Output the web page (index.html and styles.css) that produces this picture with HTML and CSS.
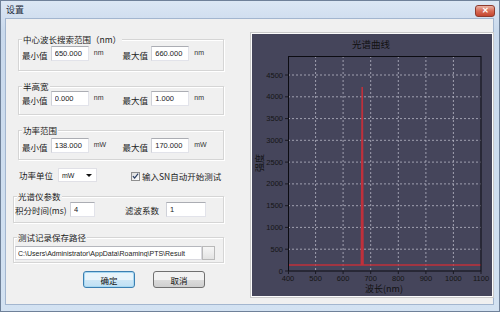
FILE: index.html
```html
<!DOCTYPE html>
<html lang="zh-CN">
<head>
  <meta charset="UTF-8">
  <meta name="viewport" content="width=device-width, initial-scale=1.0">
  <title>设置</title>
  <link rel="stylesheet" href="styles.css">
</head>
<body>
  <div class="window">
    <div class="titlebar">
      <span class="title">设置</span>
      <span class="close">✕</span>
    </div>

    <div class="client">
      <div class="form">
        <div class="group g1">
          <span class="group-title">中心波长搜索范围（nm）</span>
          <div class="row">
            <span class="lbl">最小值</span>
            <input class="field" value="650.000">
            <span class="unit">nm</span>
            <span class="lbl">最大值</span>
            <input class="field" value="660.000">
            <span class="unit">nm</span>
          </div>
        </div>

        <div class="group g2">
          <span class="group-title">半高宽</span>
          <div class="row">
            <span class="lbl">最小值</span>
            <input class="field" value="0.000">
            <span class="unit">nm</span>
            <span class="lbl">最大值</span>
            <input class="field" value="1.000">
            <span class="unit">nm</span>
          </div>
        </div>

        <div class="group g3">
          <span class="group-title">功率范围</span>
          <div class="row">
            <span class="lbl">最小值</span>
            <input class="field" value="138.000">
            <span class="unit">mW</span>
            <span class="lbl">最大值</span>
            <input class="field" value="170.000">
            <span class="unit">mW</span>
          </div>
        </div>

        <div class="power-row">
          <span class="lbl-wide">功率单位</span>
          <div class="select">
            <span>mW</span>
            <span class="arrow"></span>
          </div>
          <label class="check">
            <span class="box">
              <svg width="8" height="8" viewBox="0 0 8 8"><path d="M1 4.2 L3 6.3 L7 1.3" fill="none" stroke="#2b3f63" stroke-width="1.4"/></svg>
            </span>
            输入SN自动开始测试
          </label>
        </div>

        <div class="group g4">
          <span class="group-title">光谱仪参数</span>
          <div class="row row-spec">
            <span class="lbl-spec">积分时间(ms)</span>
            <input class="field small" value="4">
            <span class="lbl-filter">滤波系数</span>
            <input class="field" value="1">
          </div>
        </div>

        <div class="group g5">
          <span class="group-title">测试记录保存路径</span>
          <div class="path-row">
            <input class="path" value="C:\Users\Administrator\AppData\Roaming\PTS\Result">
            <span class="browse"></span>
          </div>
        </div>

        <div class="buttons">
          <button class="btn default">确定</button>
          <button class="btn">取消</button>
        </div>
      </div>

      <div class="chart">
        <svg width="240" height="262" viewBox="0 0 240 262">
          <text class="chart-title" x="119" y="14">光谱曲线</text>

          <!-- grid -->
          <g class="grid">
            <line x1="36" y1="41" x2="229" y2="41"/>
            <line x1="36" y1="62.8" x2="229" y2="62.8"/>
            <line x1="36" y1="84.6" x2="229" y2="84.6"/>
            <line x1="36" y1="106.3" x2="229" y2="106.3"/>
            <line x1="36" y1="128.1" x2="229" y2="128.1"/>
            <line x1="36" y1="149.9" x2="229" y2="149.9"/>
            <line x1="36" y1="171.7" x2="229" y2="171.7"/>
            <line x1="36" y1="193.4" x2="229" y2="193.4"/>
            <line x1="36" y1="215.2" x2="229" y2="215.2"/>
            <line x1="63.6" y1="22" x2="63.6" y2="237"/>
            <line x1="91.1" y1="22" x2="91.1" y2="237"/>
            <line x1="118.7" y1="22" x2="118.7" y2="237"/>
            <line x1="146.3" y1="22" x2="146.3" y2="237"/>
            <line x1="173.9" y1="22" x2="173.9" y2="237"/>
            <line x1="201.4" y1="22" x2="201.4" y2="237"/>
          </g>

          <!-- curve -->
          <polyline class="curve" points="36,231 109.4,231 110.2,53 111,231 229,231"/>

          <rect class="frame" x="36.5" y="22.5" width="192.5" height="214.5"/>

          <!-- ticks -->
          <g class="ticks">
            <line x1="33" y1="41" x2="36" y2="41"/>
            <line x1="33" y1="62.8" x2="36" y2="62.8"/>
            <line x1="33" y1="84.6" x2="36" y2="84.6"/>
            <line x1="33" y1="106.3" x2="36" y2="106.3"/>
            <line x1="33" y1="128.1" x2="36" y2="128.1"/>
            <line x1="33" y1="149.9" x2="36" y2="149.9"/>
            <line x1="33" y1="171.7" x2="36" y2="171.7"/>
            <line x1="33" y1="193.4" x2="36" y2="193.4"/>
            <line x1="33" y1="215.2" x2="36" y2="215.2"/>
            <line x1="33" y1="237" x2="36" y2="237"/>
            <line x1="36.5" y1="237" x2="36.5" y2="240"/>
            <line x1="63.6" y1="237" x2="63.6" y2="240"/>
            <line x1="91.1" y1="237" x2="91.1" y2="240"/>
            <line x1="118.7" y1="237" x2="118.7" y2="240"/>
            <line x1="146.3" y1="237" x2="146.3" y2="240"/>
            <line x1="173.9" y1="237" x2="173.9" y2="240"/>
            <line x1="201.4" y1="237" x2="201.4" y2="240"/>
            <line x1="229" y1="237" x2="229" y2="240"/>
          </g>

          <g class="ylabels">
            <text x="31" y="43.5">4500</text>
            <text x="31" y="65.3">4000</text>
            <text x="31" y="87.1">3500</text>
            <text x="31" y="108.8">3000</text>
            <text x="31" y="130.6">2500</text>
            <text x="31" y="152.4">2000</text>
            <text x="31" y="174.2">1500</text>
            <text x="31" y="195.9">1000</text>
            <text x="31" y="217.7">500</text>
            <text x="31" y="239.5">0</text>
          </g>

          <g class="xlabels">
            <text x="36" y="247">400</text>
            <text x="63.6" y="247">500</text>
            <text x="91.1" y="247">600</text>
            <text x="118.7" y="247">700</text>
            <text x="146.3" y="247">800</text>
            <text x="173.9" y="247">900</text>
            <text x="201.4" y="247">1000</text>
            <text x="229" y="247">1100</text>
          </g>

          <text class="axis-title" x="132" y="258">波长(nm)</text>
          <text class="axis-title" x="11" y="129" transform="rotate(-90 11 129)">强度</text>
        </svg>
      </div>
    </div>
  </div>
</body>
</html>
```

FILE: styles.css
```css
:root {
  --frame: #c9d9ec;
  --frame-dark: #6f8199;
  --face: #f0f0f0;
  --field-border: #abadb3;
  --text: #1b1b1b;
  --chart-bg: #45455b;
  --cjk: "Noto Sans CJK SC", "Liberation Sans", sans-serif;
  --latin: "Liberation Sans", "Noto Sans CJK SC", sans-serif;
}

* {
  box-sizing: border-box;
  margin: 0;
  padding: 0;
}

body {
  width: 500px;
  height: 312px;
  overflow: hidden;
  font-family: var(--cjk);
  font-size: 8.5px;
  color: var(--text);
}

.window {
  width: 500px;
  height: 312px;
  display: flex;
  flex-direction: column;
  background: linear-gradient(#dce7f4, var(--frame) 30px, #d3e2f2);
  border: 1px solid var(--frame-dark);
  padding: 0 5px 6px 4px;
}

.titlebar {
  height: 17px;
  display: flex;
  align-items: center;
  justify-content: space-between;
  padding-left: 1px;
}

.title {
  font-size: 9px;
  color: #1e2a3a;
}

.close {
  width: 20px;
  height: 12px;
  margin-top: 3px;
  margin-right: -1px;
  border: 1px solid #8e3b2e;
  border-radius: 3px;
  background: linear-gradient(#eab4a6, #d86a55 50%, #c4462f);
  color: #fff;
  font-size: 8px;
  font-weight: bold;
  line-height: 10px;
  text-align: center;
  font-family: var(--latin);
}

.client {
  flex: 1;
  display: flex;
  background: var(--face);
  border: 1px solid #a3b6cf;
}

.form {
  width: 246px;
  padding-left: 12px;
}

/* group boxes */
.group {
  position: relative;
  width: 206px;
  border: 1px solid #d5d5d5;
  box-shadow: inset 1px 1px 0 #fff, 1px 1px 0 #fff;
  padding-left: 3px;
}

.group-title {
  position: absolute;
  top: -7px;
  left: 3px;
  padding: 0 1px;
  background: var(--face);
  line-height: 12px;
}

.g1 { margin-top: 20px; padding-top: 6px; padding-bottom: 9px; }
.g2 { margin-top: 15px; padding-top: 4px; padding-bottom: 8px; }
.g3 { margin-top: 15px; padding-top: 7px; padding-bottom: 6px; }
.g4 { margin-top: 14px; padding-top: 5px; padding-bottom: 5px; width: 211px; margin-left: -5px; }
.g5 { margin-top: 14px; padding-top: 8px; padding-bottom: 2px; width: 211px; margin-left: -5px; }

.row {
  display: flex;
  align-items: center;
  height: 15px;
}

.lbl {
  width: 34px;
  padding-top: 2px;
}

.unit {
  width: 39px;
  padding-left: 5px;
  font-family: var(--latin);
  font-size: 7px;
  color: #333;
  padding-bottom: 2px;
}

.field {
  width: 38px;
  height: 15px;
  border: 1px solid #e2e3ea;
  border-top-color: #abadb3;
  border-left-color: #cfd1d8;
  background: #fff;
  font-family: var(--latin);
  font-size: 7.5px;
  color: #222;
  padding: 0 3px;
  outline: none;
}

.row-spec .lbl-spec {
  width: 55px;
  margin-left: -2px;
}

.field.small {
  width: 25px;
}

.lbl-filter {
  width: 41px;
  margin-left: 30px;
}

.row .field:last-child {
  width: 39px;
}

.row-spec .field:last-child {
  width: 40px;
}

/* power unit + checkbox */
.power-row {
  display: flex;
  align-items: center;
  height: 14px;
  margin-top: 8px;
}

.lbl-wide {
  width: 39px;
  margin-left: 1px;
}

.select {
  width: 39px;
  height: 14px;
  display: flex;
  align-items: center;
  justify-content: space-between;
  padding: 0 4px 0 3px;
  background: #fff;
  border: 1px solid #e0e0e6;
  font-family: var(--latin);
  font-size: 7px;
}

.arrow {
  width: 0;
  height: 0;
  border-left: 3px solid transparent;
  border-right: 3px solid transparent;
  border-top: 3px solid #111;
}

.check {
  display: flex;
  align-items: center;
  gap: 2px;
  margin-left: 34px;
  padding-top: 2px;
}

.box {
  width: 9px;
  height: 9px;
  display: flex;
  align-items: center;
  justify-content: center;
  border: 1px solid #8f8f8f;
  background: linear-gradient(135deg, #dcdcdc, #fff);
}

/* path */
.path-row {
  display: flex;
  margin-left: -2px;
}

.path {
  width: 187px;
  height: 14px;
  border: 1px solid #d9d9df;
  border-top-color: #b5b7bd;
  background: #fff;
  font-family: var(--latin);
  font-size: 7px;
  color: #222;
  padding: 0 2px;
  outline: none;
}

.browse {
  width: 13px;
  height: 14px;
  border: 1px solid #b9b9b9;
  background: linear-gradient(#f6f6f6, #e3e3e3);
}

/* buttons */
.buttons {
  display: flex;
  gap: 18px;
  margin-top: 8px;
  padding-left: 65px;
}

.btn {
  width: 52px;
  height: 17px;
  border: 1px solid #707070;
  border-radius: 3px;
  background: linear-gradient(#f2f2f2 50%, #dddddd 50%, #cfcfcf);
  font-family: var(--cjk);
  font-size: 8.5px;
  color: #111;
}

.btn.default {
  border-color: #3c7fb1;
  box-shadow: inset 0 0 0 1px #a7d8f2;
  background: linear-gradient(#e8f4fb 50%, #cfe7f6 50%, #bfe0f4);
}

/* chart */
.chart {
  width: 242px;
  height: 264px;
  margin-top: 14px;
  border: 1px solid #fdfdfd;
  outline: 1px solid #c9c9c9;
  background: var(--chart-bg);
}

.chart svg {
  display: block;
}

.chart-title {
  font-family: var(--cjk);
  font-size: 9.5px;
  fill: #111;
  text-anchor: middle;
}

.grid line {
  stroke: #b9b9c6;
  stroke-width: 0.8;
  stroke-dasharray: 2 2;
}

.curve {
  fill: none;
  stroke: #c0303b;
  stroke-width: 1.6;
  stroke-linejoin: miter;
}

.frame {
  fill: none;
  stroke: #0c0c12;
  stroke-width: 1;
}

.ticks line {
  stroke: #1a1a22;
  stroke-width: 1;
}

.ylabels text,
.xlabels text {
  font-family: var(--latin);
  font-size: 7.5px;
  fill: #151515;
}

.ylabels text {
  text-anchor: end;
}

.xlabels text {
  text-anchor: middle;
}

.axis-title {
  font-family: var(--cjk);
  font-size: 9px;
  fill: #111;
  text-anchor: middle;
}
```
